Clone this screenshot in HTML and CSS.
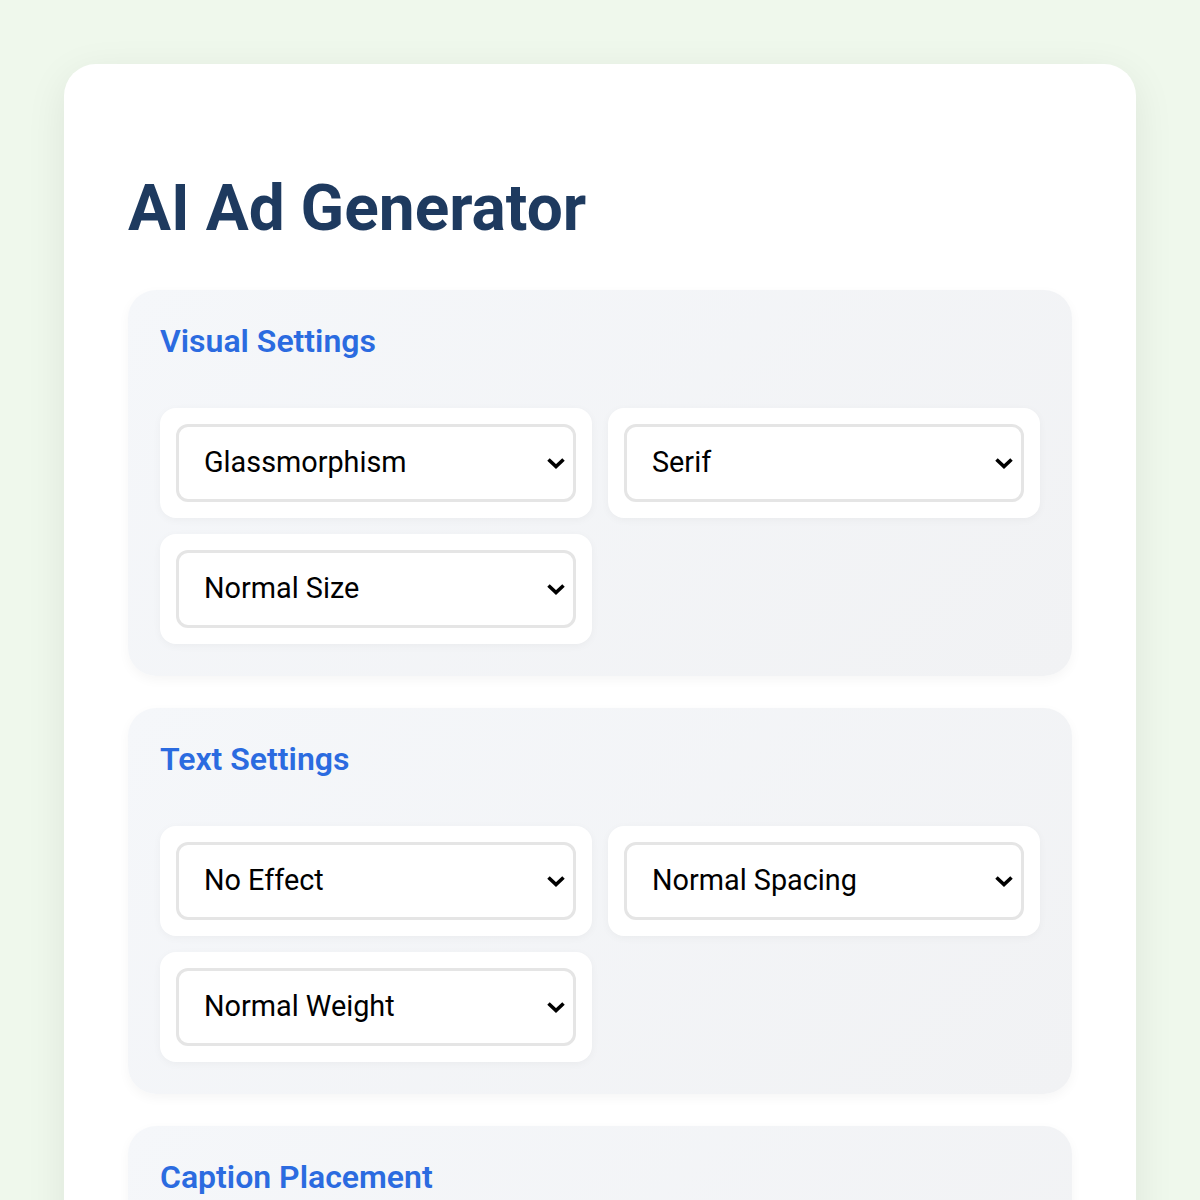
FILE: index.html
```html
<!DOCTYPE html>
<html lang="en">
<head>
<meta charset="utf-8">
<title>AI Ad Generator</title>
<link rel="stylesheet" href="styles.css">
</head>
<body>
<main class="container">
  <h1 class="title">AI Ad Generator</h1>

  <section class="panel">
    <h2 class="panel-title">Visual Settings</h2>
    <div class="grid">
      <div class="field">
        <select class="select">
          <option>Glassmorphism</option>
        </select>
        <svg class="chevron" viewBox="0 0 20 12" width="20" height="12" aria-hidden="true"><polyline points="2.5,2.5 10,9.5 17.5,2.5" fill="none" stroke="#000" stroke-width="3.6" stroke-linecap="butt" stroke-linejoin="miter"/></svg>
      </div>
      <div class="field">
        <select class="select">
          <option>Serif</option>
        </select>
        <svg class="chevron" viewBox="0 0 20 12" width="20" height="12" aria-hidden="true"><polyline points="2.5,2.5 10,9.5 17.5,2.5" fill="none" stroke="#000" stroke-width="3.6" stroke-linecap="butt" stroke-linejoin="miter"/></svg>
      </div>
      <div class="field">
        <select class="select">
          <option>Normal Size</option>
        </select>
        <svg class="chevron" viewBox="0 0 20 12" width="20" height="12" aria-hidden="true"><polyline points="2.5,2.5 10,9.5 17.5,2.5" fill="none" stroke="#000" stroke-width="3.6" stroke-linecap="butt" stroke-linejoin="miter"/></svg>
      </div>
    </div>
  </section>

  <section class="panel">
    <h2 class="panel-title">Text Settings</h2>
    <div class="grid">
      <div class="field">
        <select class="select">
          <option>No Effect</option>
        </select>
        <svg class="chevron" viewBox="0 0 20 12" width="20" height="12" aria-hidden="true"><polyline points="2.5,2.5 10,9.5 17.5,2.5" fill="none" stroke="#000" stroke-width="3.6" stroke-linecap="butt" stroke-linejoin="miter"/></svg>
      </div>
      <div class="field">
        <select class="select">
          <option>Normal Spacing</option>
        </select>
        <svg class="chevron" viewBox="0 0 20 12" width="20" height="12" aria-hidden="true"><polyline points="2.5,2.5 10,9.5 17.5,2.5" fill="none" stroke="#000" stroke-width="3.6" stroke-linecap="butt" stroke-linejoin="miter"/></svg>
      </div>
      <div class="field">
        <select class="select">
          <option>Normal Weight</option>
        </select>
        <svg class="chevron" viewBox="0 0 20 12" width="20" height="12" aria-hidden="true"><polyline points="2.5,2.5 10,9.5 17.5,2.5" fill="none" stroke="#000" stroke-width="3.6" stroke-linecap="butt" stroke-linejoin="miter"/></svg>
      </div>
    </div>
  </section>

  <section class="panel">
    <h2 class="panel-title">Caption Placement</h2>
    <div class="grid">
      <div class="field">
        <select class="select">
          <option>Bottom</option>
        </select>
        <svg class="chevron" viewBox="0 0 20 12" width="20" height="12" aria-hidden="true"><polyline points="2.5,2.5 10,9.5 17.5,2.5" fill="none" stroke="#000" stroke-width="3.6" stroke-linecap="butt" stroke-linejoin="miter"/></svg>
      </div>
      <div class="field">
        <select class="select">
          <option>Center Aligned</option>
        </select>
        <svg class="chevron" viewBox="0 0 20 12" width="20" height="12" aria-hidden="true"><polyline points="2.5,2.5 10,9.5 17.5,2.5" fill="none" stroke="#000" stroke-width="3.6" stroke-linecap="butt" stroke-linejoin="miter"/></svg>
      </div>
    </div>
  </section>
</main>
</body>
</html>
```

FILE: styles.css
```css
html, body {
  margin: 0;
  padding: 0;
}

body {
  background: #eff8ec;
  font-family: Roboto, "Liberation Sans", sans-serif;
  padding: 64px;
}

.container {
  background: #ffffff;
  border-radius: 32px;
  padding: 64px;
  box-shadow: 0 10px 40px rgba(0, 0, 0, 0.08);
}

.title {
  font-size: 64px;
  font-weight: 700;
  color: #1e3a5f;
  margin: 43px 0 44px;
  line-height: 75px;
}

.panel {
  background: linear-gradient(135deg, #f5f7fa 0%, #f1f2f4 100%);
  border-radius: 28px;
  padding: 32px;
  margin-bottom: 32px;
  box-shadow: 0 4px 12px rgba(0, 0, 0, 0.04);
}

.panel-title {
  font-size: 32px;
  font-weight: 600;
  color: #2b6be0;
  margin: 0 0 48px;
  line-height: 38px;
}

.grid {
  display: grid;
  grid-template-columns: 1fr 1fr;
  gap: 16px;
}

.field {
  position: relative;
  background: #ffffff;
  border-radius: 16px;
  padding: 16px;
  box-shadow: 0 2px 8px rgba(0, 0, 0, 0.04);
}

.select {
  display: block;
  width: 100%;
  height: 78px;
  box-sizing: border-box;
  appearance: none;
  -webkit-appearance: none;
  font-family: Roboto, "Liberation Sans", sans-serif;
  font-size: 28.8px;
  color: #000000;
  background: #ffffff;
  border: 3px solid #e5e5e5;
  border-radius: 12px;
  padding: 0 48px 2px 25px;
  outline: none;
}

.chevron {
  position: absolute;
  right: 26px;
  top: 50%;
  transform: translateY(-50%);
  pointer-events: none;
}
```
